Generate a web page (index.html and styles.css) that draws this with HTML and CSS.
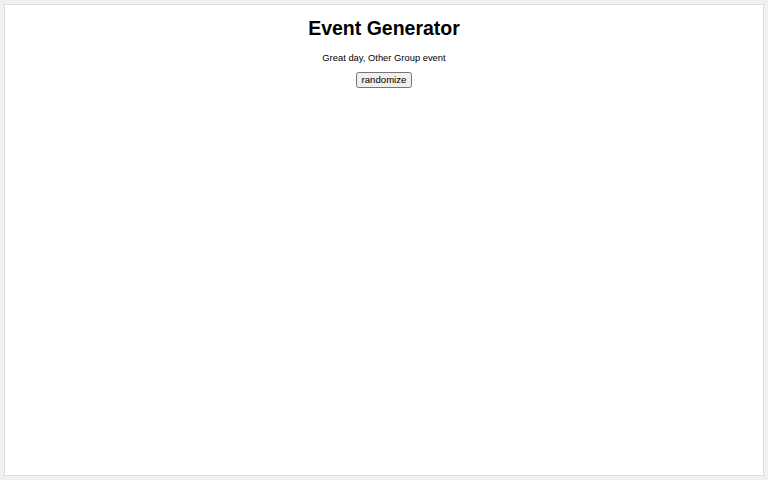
FILE: index.html
```html
<!DOCTYPE html>
<html lang="en">
  <head>
    <meta charset="UTF-8" />
    <meta name="viewport" content="width=device-width, initial-scale=1.0" />
    <title>Event Generator</title>
    <link rel="stylesheet" href="styles.css">
  </head>
  <body>
    <div class="app">
      <h1 class="title">Event Generator</h1>
      <p class="event">Great day, Other Group event</p>
      <button class="randomize">randomize</button>
    </div>
  </body>
</html>
```

FILE: styles.css
```css
html,
body {
  height: 100%;
}

body {
  margin: 0;
  padding: 4px;
  box-sizing: border-box;
  background-color: #f0f0f0;
  font-family: 'Liberation Sans', Arial, sans-serif;
}

.app {
  height: 100%;
  box-sizing: border-box;
  background-color: #fff;
  border: 1px solid #dcdcdc;
  display: flex;
  flex-direction: column;
  align-items: center;
  padding-top: 12px;
}

.title {
  margin: 0;
  font-size: 19.5px;
  font-weight: bold;
  color: #000;
}

.event {
  margin: 12px 0 9px;
  font-size: 9.4px;
  color: #000;
}

.randomize {
  font-family: 'Liberation Sans', Arial, sans-serif;
  font-size: 9.6px;
  line-height: 10px;
  padding: 1px 4px;
}
```
